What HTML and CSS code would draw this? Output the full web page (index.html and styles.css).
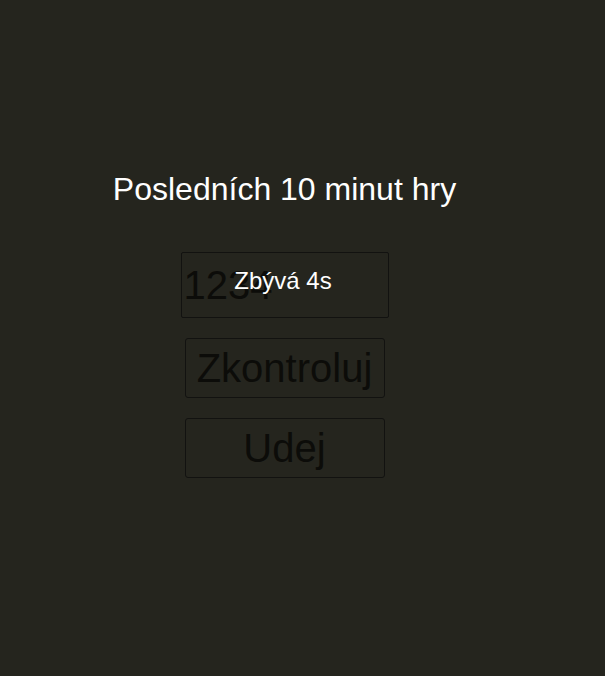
FILE: index.html
```html
<!DOCTYPE html>
<html lang="cs">
<head>
<meta charset="utf-8">
<title>Posledních 10 minut hry</title>
<link rel="stylesheet" href="styles.css">
</head>
<body>
<main class="game">
  <h1 class="title">Posledních 10 minut hry</h1>
  <div class="field">
    <input class="code" type="text" value="1234">
    <div class="timer">Zbývá 4s</div>
  </div>
  <button class="btn" type="button">Zkontroluj</button>
  <button class="btn" type="button">Udej</button>
</main>
</body>
</html>
```
FILE: styles.css
```css
html, body {
  margin: 0;
  padding: 0;
  background: #25251e;
  height: 100%;
}
body {
  font-family: "Liberation Sans", Arial, sans-serif;
}
.game {
  width: 569px;
  display: flex;
  flex-direction: column;
  align-items: center;
  padding-top: 171px;
}
.title {
  margin: 0;
  font-size: 32px;
  font-weight: normal;
  color: #ffffff;
  line-height: 37px;
}
.field {
  position: relative;
  margin-top: 44px;
  width: 208px;
  height: 66px;
}
.code {
  box-sizing: border-box;
  width: 208px;
  height: 66px;
  margin: 0;
  padding: 0 2px;
  font-family: "Liberation Sans", Arial, sans-serif;
  font-size: 40px;
  color: #0c0c09;
  background: #25251e;
  border: 1px solid #121210;
  border-radius: 2px;
  outline: none;
}
.timer {
  position: absolute;
  left: 0;
  right: 3px;
  top: 15px;
  text-align: center;
  font-size: 24px;
  color: #ffffff;
}
.btn {
  box-sizing: border-box;
  width: 200px;
  height: 60px;
  margin-top: 20px;
  padding: 0;
  font-family: "Liberation Sans", Arial, sans-serif;
  font-size: 40px;
  color: #0c0c09;
  background: #25251e;
  border: 1px solid #121210;
  border-radius: 3px;
}
```
